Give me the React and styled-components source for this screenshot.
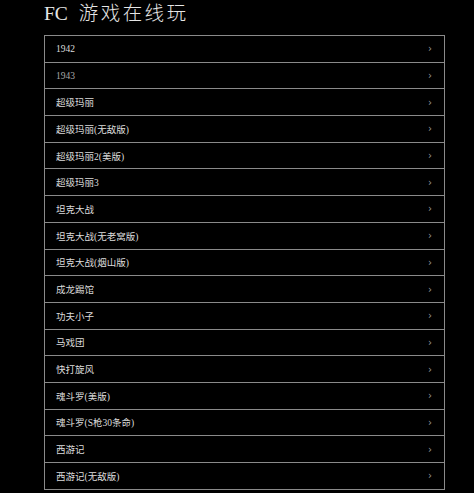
import styled, { createGlobalStyle } from "styled-components";

const GlobalStyle = createGlobalStyle`
    html, body {
        margin: 0;
        padding: 0;
        background-color: #000;
    }
`

const Page = styled.div`
    padding: 0 0 0 44px;
    width: 401px;
    font-family: "Liberation Serif", "Noto Sans CJK SC", serif;
`

const Title = styled.h1`
    display: flex;
    gap: 11px;
    margin: 0;
    height: 35px;
    line-height: 28px;
    font-size: 19.5px;
    font-weight: normal;
    color: #e6e6e6;
`

const TitleCjk = styled.span`
    letter-spacing: 2.4px;
    font-weight: 300;
`

const List = styled.ul`
    list-style: none;
    margin: 0;
    padding: 0;
    border: 1px solid #8a8a8a;
    border-bottom: none;
`

const Row = styled.li`
    display: flex;
    align-items: center;
    justify-content: space-between;
    box-sizing: border-box;
    height: 26.7px;
    padding: 0 12px 0 11px;
    border-bottom: 1px solid #8a8a8a;
    font-size: 9.5px;
    color: ${(p) => (p.$visited ? "#a8a8a8" : "#dcdcdc")};
    font-family: "Liberation Serif", "Noto Sans CJK SC", serif;
`

const Chevron = styled.span`
    color: #9a9a9a;
    font-size: 10px;
    font-family: "DejaVu Sans", sans-serif;
`

const games = [
    "1942",
    "1943",
    "超级玛丽",
    "超级玛丽(无敌版)",
    "超级玛丽2(美版)",
    "超级玛丽3",
    "坦克大战",
    "坦克大战(无老窝版)",
    "坦克大战(烟山版)",
    "成龙踢馆",
    "功夫小子",
    "马戏团",
    "快打旋风",
    "魂斗罗(美版)",
    "魂斗罗(S枪30条命)",
    "西游记",
    "西游记(无敌版)",
]

export default function App() {
    return (
        <>
            <GlobalStyle />
            <Page>
                <Title>
                    <span>FC</span>
                    <TitleCjk>游戏在线玩</TitleCjk>
                </Title>
                <List>
                    {games.map((name) => (
                        <Row key={name} $visited={name === "1943"}>
                            <span>{name}</span>
                            <Chevron>›</Chevron>
                        </Row>
                    ))}
                </List>
            </Page>
        </>
    )
}
